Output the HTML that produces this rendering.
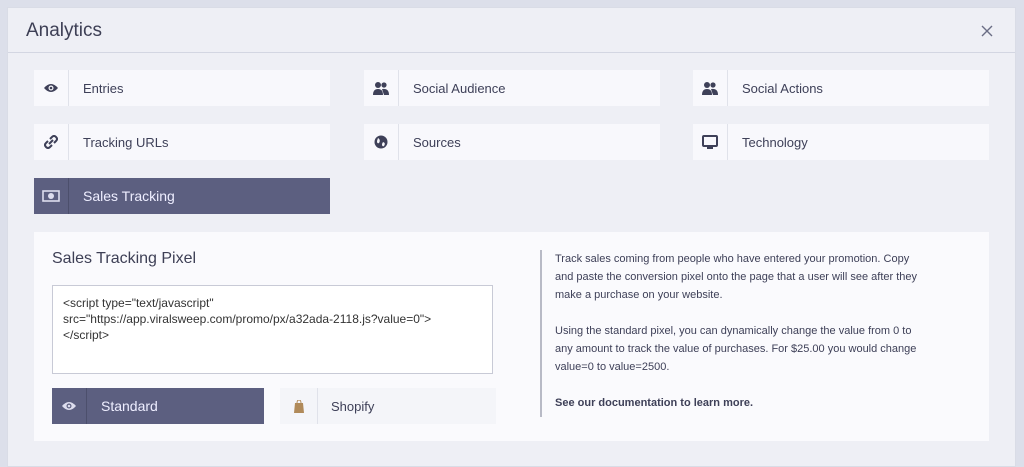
<!DOCTYPE html><html><head><style>
*{box-sizing:border-box;margin:0;padding:0}
body{width:1024px;height:454px;background:#dcdfea;font-family:"Liberation Sans",sans-serif;color:#3e4058;position:relative;overflow:hidden}
.modal{position:absolute;left:7px;top:7px;width:1009px;height:460px;background:#eeeff5;border:1px solid #d9dce6}
.hdr{height:45px;border-bottom:1px solid #d3d6e2;position:relative}
.hdr h1{position:absolute;left:18px;top:12px;font-size:19px;font-weight:normal;color:#3d3f55}
.x{position:absolute;left:973px;top:16px}
.btn{position:absolute;width:296px;height:36px;background:#f8f8fc;font-size:13px;color:#3e4058}
.btn .ic{position:absolute;left:0;top:0;width:35px;height:36px;border-right:1px solid #e0e2ea;display:flex;align-items:center;justify-content:center}
.btn .t{position:absolute;left:49px;top:11px}
.btn.on{background:#5c5f80;color:#eef}
.btn.on .ic{border-right:1px solid #4c4f6c}
.panel{position:absolute;left:34px;top:232px;width:955px;height:209px;background:#fafafd}
.panel h2{position:absolute;left:18px;top:18px;font-size:16px;font-weight:normal;color:#3d3f55}
.ta{position:absolute;left:18px;top:53px;width:441px;height:89px;border:1px solid #c8cad6;background:#fff;font-size:12px;line-height:16px;padding:9px 10px;color:#333}
.div{position:absolute;left:506px;top:18px;width:2px;height:167px;background:#b8bac6}
.rt{position:absolute;left:521px;top:18px;width:374px;font-size:11px;line-height:18px;color:#3e4058}
</style></head><body>
<div class="modal"><div class="hdr"><h1>Analytics</h1><div class="x"><svg width="12" height="12" viewBox="0 0 12 12"><path d="M1 1L11 11M11 1L1 11" stroke="#6a6d85" stroke-width="1.4"/></svg></div></div></div>

<div class="btn" style="left:34px;top:70px"><div class="ic"><svg width="16" height="10" viewBox="0 0 16 10"><path d="M1 5Q8-3 15 5Q8 13 1 5Z" fill="#3e4058"/><circle cx="8" cy="5" r="2.5" fill="#f8f8fc"/><circle cx="8" cy="5" r="1.3" fill="#3e4058"/></svg></div><div class="t">Entries</div></div>
<div class="btn" style="left:364px;top:70px"><div class="ic"><svg width="16" height="14" viewBox="0 0 16 14"><circle cx="5" cy="4" r="3" fill="#3e4058"/><path d="M0 14Q0 8 5 8Q10 8 10 14Z" fill="#3e4058"/><circle cx="11" cy="4" r="2.6" fill="#3e4058"/><path d="M9 8Q16 7 16 14H11Z" fill="#3e4058"/></svg></div><div class="t">Social Audience</div></div>
<div class="btn" style="left:693px;top:70px"><div class="ic"><svg width="16" height="14" viewBox="0 0 16 14"><circle cx="5" cy="4" r="3" fill="#3e4058"/><path d="M0 14Q0 8 5 8Q10 8 10 14Z" fill="#3e4058"/><circle cx="11" cy="4" r="2.6" fill="#3e4058"/><path d="M9 8Q16 7 16 14H11Z" fill="#3e4058"/></svg></div><div class="t">Social Actions</div></div>

<div class="btn" style="left:34px;top:124px"><div class="ic"><svg width="14" height="14" viewBox="0 0 14 14"><path d="M6 4L8 2Q10 0 12 2Q14 4 12 6L10 8M8 10L6 12Q4 14 2 12Q0 10 2 8L4 6M5 9L9 5" stroke="#3e4058" stroke-width="2" fill="none"/></svg></div><div class="t">Tracking URLs</div></div>
<div class="btn" style="left:364px;top:124px"><div class="ic"><svg width="14" height="14" viewBox="0 0 14 14"><circle cx="7" cy="7" r="6.5" fill="#3e4058"/><path d="M4 3Q7 5 5 8Q3 9 3 6ZM9 7Q12 8 10 11Q8 12 8 9Z" fill="#f8f8fc"/></svg></div><div class="t">Sources</div></div>
<div class="btn" style="left:693px;top:124px"><div class="ic"><svg width="16" height="14" viewBox="0 0 16 14"><rect x="1" y="1" width="14" height="10" rx="1" stroke="#3e4058" stroke-width="2" fill="none"/><rect x="5" y="12" width="6" height="2" fill="#3e4058"/></svg></div><div class="t">Technology</div></div>

<div class="btn on" style="left:34px;top:178px;font-size:14px"><div class="ic"><svg width="18" height="12" viewBox="0 0 18 12"><rect x="1" y="1" width="16" height="10" stroke="#dde" stroke-width="1.6" fill="none"/><circle cx="9" cy="6" r="3" fill="#dde"/></svg></div><div class="t" style="top:10px">Sales Tracking</div></div>

<div class="panel">
<h2>Sales Tracking Pixel</h2>
<div class="ta">&lt;script type="text/javascript"<br>src="https://app.viralsweep.com/promo/px/a32ada-2118.js?value=0"&gt;<br>&lt;/script&gt;</div>
<div class="btn on" style="left:18px;top:156px;width:212px;font-size:14px"><div class="ic"><svg width="16" height="10" viewBox="0 0 16 10"><path d="M1 5Q8-3 15 5Q8 13 1 5Z" fill="#dde"/><circle cx="8" cy="5" r="2.5" fill="#5c5f80"/><circle cx="8" cy="5" r="1.3" fill="#dde"/></svg></div><div class="t" style="top:10px">Standard</div></div>
<div class="btn" style="left:246px;top:156px;width:216px;background:#f4f5f9"><div class="ic" style="width:38px"><svg width="10" height="13" viewBox="0 0 10 13"><path d="M1 3H9L10 13H0Z" fill="#b08a5a"/><path d="M3 3Q3 0 5 0Q7 0 7 3" stroke="#b08a5a" fill="none"/></svg></div><div class="t" style="left:51px">Shopify</div></div>
<div class="div"></div>
<div class="rt">Track sales coming from people who have entered your promotion. Copy and paste the conversion pixel onto the page that a user will see after they make a purchase on your website.<br><br>Using the standard pixel, you can dynamically change the value from 0 to any amount to track the value of purchases. For $25.00 you would change value=0 to value=2500.<br><br><b style="font-weight:600">See our documentation to learn more.</b></div>
</div>
</body></html>
